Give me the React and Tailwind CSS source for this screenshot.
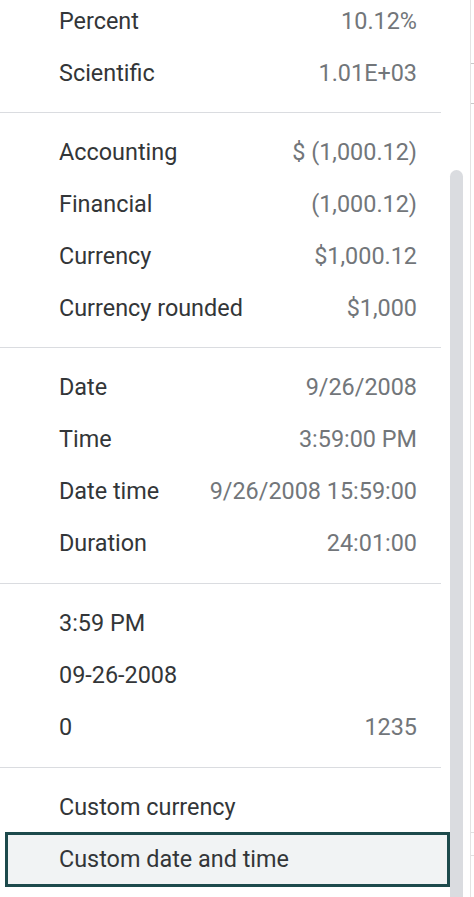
import React from 'react';

const sections = [
    [
        { label: 'Percent', value: '10.12%' },
        { label: 'Scientific', value: '1.01E+03' },
    ],
    [
        { label: 'Accounting', value: '$ (1,000.12)' },
        { label: 'Financial', value: '(1,000.12)' },
        { label: 'Currency', value: '$1,000.12' },
        { label: 'Currency rounded', value: '$1,000' },
    ],
    [
        { label: 'Date', value: '9/26/2008' },
        { label: 'Time', value: '3:59:00 PM' },
        { label: 'Date time', value: '9/26/2008 15:59:00' },
        { label: 'Duration', value: '24:01:00' },
    ],
    [
        { label: '3:59 PM', value: '' },
        { label: '09-26-2008', value: '' },
        { label: '0', value: '1235' },
    ],
    [
        { label: 'Custom currency', value: '' },
        { label: 'Custom date and time', value: '', active: true },
    ],
];

const Row = ({ item }) => {
    if (item.active) {
        return (
            <div className='ml-[5px] w-[445px] h-[55px] -mt-px flex items-center pl-[51px] bg-[#f1f3f4] border-[3px] border-[#1d4a4c]'>
                <span className='text-[#333638]'>{item.label}</span>
            </div>
        );
    }
    return (
        <div className='h-[52px] flex items-center justify-between pl-[59px] pr-[31px] pt-[2px]'>
            <span className='text-[#333638]'>{item.label}</span>
            <span className='text-[#72767a]'>{item.value}</span>
        </div>
    );
};

const App = () => {
    return (
        <div className="flex w-[474px] h-[897px] overflow-hidden bg-white text-[23.4px] leading-none" style={{ fontFamily: 'Roboto, "Liberation Sans", sans-serif' }}>
            {/* Menu content */}
            <div className='w-[448px] shrink-0 -mt-[18px]'>
                {sections.map((section, i) => (
                    <div key={i}>
                        {i > 0 && <div className='h-px w-[441px] bg-[#dadce0]'></div>}
                        <div className={i === 2 || i === 3 ? 'pt-[13px] pb-[14px]' : 'py-[13px]'}>
                            {section.map((item) => (
                                <Row key={item.label} item={item} />
                            ))}
                        </div>
                    </div>
                ))}
            </div>

            {/* Scrollbar gutter */}
            <div className='w-[16px] shrink-0 flex justify-center'>
                <div className='mt-[170px] w-[13px] h-[760px] rounded-t-full bg-[#dadce0]'></div>
            </div>

            {/* Sheet grid behind */}
            <div className='flex-1 flex flex-col border-l border-[#e3e3e3] ml-[6px]'>
                <div className='h-[63px]'></div>
                <div className='h-px bg-[#c8c8c8]'></div>
                <div className='h-[39px]'></div>
                <div className='h-px bg-[#c8c8c8]'></div>
                <div className='h-[728px]'></div>
                <div className='h-px bg-[#e0e0e0]'></div>
                <div className='h-[22px]'></div>
                <div className='h-px bg-[#e0e0e0]'></div>
            </div>
        </div>
    );
};

export default App;
